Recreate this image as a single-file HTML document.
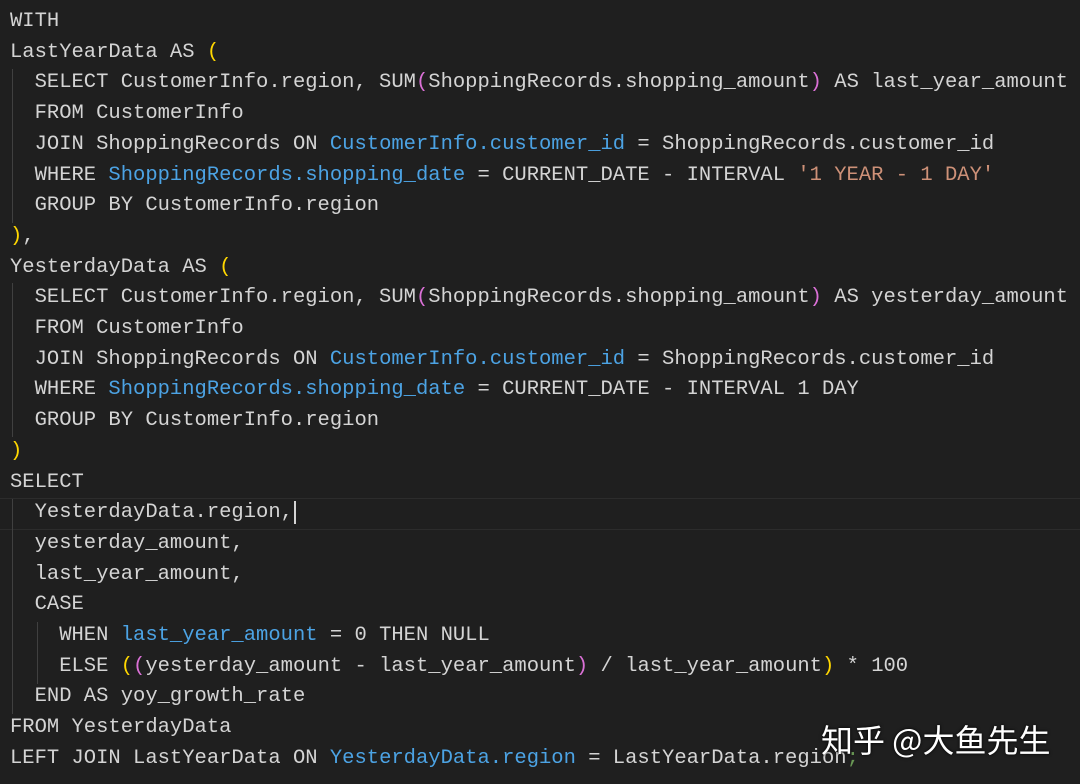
<!DOCTYPE html>
<html><head><meta charset="utf-8"><style>
body{margin:0;width:1080px;height:784px;background:#1f1f1f;overflow:hidden;position:relative}
pre{margin:0;position:absolute;left:10px;top:7px;font-family:"Liberation Mono",monospace;font-size:20.5px;line-height:30.7px;color:#d4d4d4;letter-spacing:0}
.b{color:#4ca3e4}.s{color:#ce9178}.y{color:#ffd700}.p{color:#da70d6}.g{color:#6a9955}
.guide{position:absolute;width:1px;background:#404040}
.cur{position:absolute;left:0;top:498px;width:1080px;height:30px;border-top:1px solid #2c2c2c;border-bottom:1px solid #2c2c2c}
.wm{position:absolute;left:821px;top:716px;font-family:"Noto Sans CJK SC",sans-serif;font-size:32px;color:#fff;text-shadow:0 0 3px #000}
</style></head><body>
<div class="cur"></div>
<div class="guide" style="left:12px;top:69px;height:154px"></div>
<div class="guide" style="left:12px;top:283px;height:154px"></div>
<div class="guide" style="left:12px;top:499px;height:215px"></div>
<div class="guide" style="left:37px;top:622px;height:62px"></div>
<pre>WITH
LastYearData AS <span class="y">(</span>
  SELECT CustomerInfo.region, SUM<span class="p">(</span>ShoppingRecords.shopping_amount<span class="p">)</span> AS last_year_amount
  FROM CustomerInfo
  JOIN ShoppingRecords ON <span class="b">CustomerInfo.customer_id</span> = ShoppingRecords.customer_id
  WHERE <span class="b">ShoppingRecords.shopping_date</span> = CURRENT_DATE - INTERVAL <span class="s">'1 YEAR - 1 DAY'</span>
  GROUP BY CustomerInfo.region
<span class="y">)</span>,
YesterdayData AS <span class="y">(</span>
  SELECT CustomerInfo.region, SUM<span class="p">(</span>ShoppingRecords.shopping_amount<span class="p">)</span> AS yesterday_amount
  FROM CustomerInfo
  JOIN ShoppingRecords ON <span class="b">CustomerInfo.customer_id</span> = ShoppingRecords.customer_id
  WHERE <span class="b">ShoppingRecords.shopping_date</span> = CURRENT_DATE - INTERVAL 1 DAY
  GROUP BY CustomerInfo.region
<span class="y">)</span>
SELECT
  YesterdayData.region,<span style="border-left:2px solid #d4d4d4;margin-left:1px"></span>
  yesterday_amount,
  last_year_amount,
  CASE
    WHEN <span class="b">last_year_amount</span> = 0 THEN NULL
    ELSE <span class="y">(</span><span class="p">(</span>yesterday_amount - last_year_amount<span class="p">)</span> / last_year_amount<span class="y">)</span> * 100
  END AS yoy_growth_rate
FROM YesterdayData
LEFT JOIN LastYearData ON <span class="b">YesterdayData.region</span> = LastYearData.region<span class="g">;</span></pre>
<div class="wm">知乎 @大鱼先生</div>
</body></html>
